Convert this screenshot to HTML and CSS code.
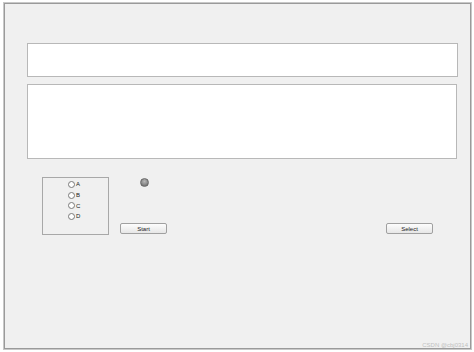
FILE: index.html
```html
<!DOCTYPE html>
<html lang="en">
<head>
    <meta charset="UTF-8">
    <meta name="viewport" content="width=device-width, initial-scale=1.0">
    <title>Quiz Panel</title>
    <link rel="stylesheet" href="styles.css">
</head>
<body>
    <div class="frame">
        <div class="textbox question"></div>
        <div class="textbox answer"></div>
        <div class="bottom-row">
            <div class="group">
                <label class="option"><span class="radio"></span>A</label>
                <label class="option"><span class="radio"></span>B</label>
                <label class="option"><span class="radio"></span>C</label>
                <label class="option"><span class="radio"></span>D</label>
            </div>
            <div class="controls">
                <span class="led"></span>
                <button class="btn">Start</button>
            </div>
            <button class="btn select">Select</button>
        </div>
        <div class="watermark">CSDN @cbj0314</div>
    </div>
</body>
</html>
```

FILE: styles.css
```css
html, body {
    margin: 0;
    background: #ffffff;
    font-family: "Liberation Sans", Arial, sans-serif;
}
.frame {
    position: relative;
    box-sizing: border-box;
    width: 469px;
    height: 348px;
    margin: 2px 0 0 3px;
    background: #f0f0f0;
    border: 1px solid #c8c8c8;
    box-shadow: inset 1px 1px 0 #9a9a9a, inset -1px -1px 0 #9a9a9a;
    padding: 40px 14px 0 23px;
}
.textbox {
    box-sizing: border-box;
    background: #ffffff;
    border: 1px solid #b8b8b8;
}
.question {
    height: 34px;
    width: 431px;
}
.answer {
    height: 75px;
    width: 430px;
    margin-top: 7px;
}
.bottom-row {
    display: flex;
    align-items: flex-start;
    width: 431px;
    margin-top: 18px;
}
.group {
    box-sizing: border-box;
    width: 67px;
    height: 58px;
    margin-left: 15px;
    border: 1px solid #a8a8a8;
    padding: 1px 0 0 25px;
}
.option {
    display: flex;
    align-items: center;
    height: 10.7px;
    font-size: 6px;
    color: #222;
}
.radio {
    box-sizing: border-box;
    width: 7px;
    height: 7px;
    margin-right: 1px;
    border: 1px solid #7a7a7a;
    border-radius: 50%;
    background: #fff;
}
.controls {
    display: flex;
    flex-direction: column;
    margin-left: 11px;
    width: 46px;
}
.led {
    width: 9px;
    height: 9px;
    margin: 1px 0 0 20px;
    border-radius: 50%;
    background: radial-gradient(circle at 50% 35%, #b8b8b8 0%, #8a8a8a 55%, #5c5c5c 100%);
    border: 1px solid #6a6a6a;
    box-sizing: border-box;
}
.btn {
    box-sizing: border-box;
    width: 47px;
    height: 11px;
    padding: 0;
    font-family: "Liberation Sans", Arial, sans-serif;
    font-size: 6px;
    color: #222;
    background: linear-gradient(#fdfdfd, #e6e6e6);
    border: 1px solid #a0a0a0;
    border-radius: 2px;
}
.controls .btn {
    margin-top: 36px;
}
.select {
    margin: 46px 25px 0 auto;
}
.watermark {
    position: absolute;
    right: 3px;
    bottom: 1px;
    font-size: 6px;
    color: #c0c0c0;
}
```
